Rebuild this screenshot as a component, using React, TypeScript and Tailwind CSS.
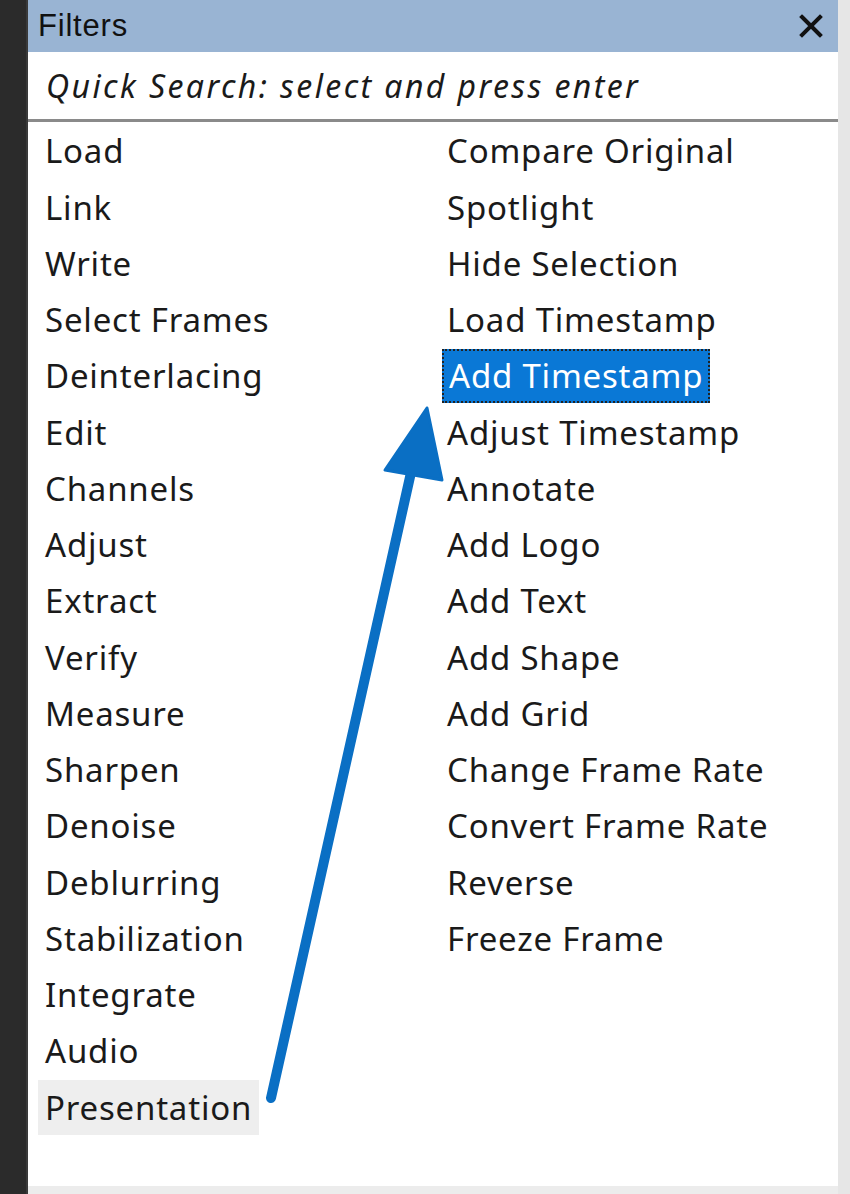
import React from "react";

const left = [
  "Load",
  "Link",
  "Write",
  "Select Frames",
  "Deinterlacing",
  "Edit",
  "Channels",
  "Adjust",
  "Extract",
  "Verify",
  "Measure",
  "Sharpen",
  "Denoise",
  "Deblurring",
  "Stabilization",
  "Integrate",
  "Audio",
  "Presentation",
];

const right = [
  "Compare Original",
  "Spotlight",
  "Hide Selection",
  "Load Timestamp",
  "Add Timestamp",
  "Adjust Timestamp",
  "Annotate",
  "Add Logo",
  "Add Text",
  "Add Shape",
  "Add Grid",
  "Change Frame Rate",
  "Convert Frame Rate",
  "Reverse",
  "Freeze Frame",
];

export default function App() {
  return (
    <div
      className="relative flex w-[850px] h-[1194px] overflow-hidden bg-white"
      style={{ fontFamily: '"Noto Sans", "Open Sans", sans-serif' }}
    >
      <div className="w-[28px] h-full bg-[#2b2b2b] border-r-2 border-[#3a3a3a]" />
      <div className="flex flex-col w-[810px] h-full">
        <div className="flex items-center justify-between h-[52px] bg-[#99b4d3] pl-[10px] pr-[14px]">
          <span
            className="text-[31px] text-[#111] tracking-[0.8px]"
            style={{ fontFamily: '"Liberation Sans", Arial, sans-serif' }}
          >
            Filters
          </span>
          <svg width="26" height="26" viewBox="0 0 26 26">
            <path d="M4 4 L22 22 M22 4 L4 22" stroke="#111" strokeWidth="4" strokeLinecap="square" />
          </svg>
        </div>
        <div className="flex items-center h-[70px] pl-[18px] border-b-[3px] border-[#8a8a8a] bg-white">
          <span className="italic text-[32px] text-[#1a1a1a] tracking-[2.4px]">
            Quick Search: select and press enter
          </span>
        </div>
        <div className="relative flex-1 flex pl-[10px] pt-[1px]">
          <div className="flex flex-col w-[404px]">
            {left.map((t) => (
              <div key={t} className="h-[56.25px] flex items-center">
                <span
                  className={
                    "px-[7px] h-[55px] flex items-center text-[33px] tracking-[0.8px] text-[#1a1a1a] " +
                    (t === "Presentation" ? "bg-[#eeeeee]" : "")
                  }
                >
                  {t}
                </span>
              </div>
            ))}
          </div>
          <div className="flex flex-col">
            {right.map((t) => (
              <div key={t} className="h-[56.25px] flex items-center">
                <span
                  className={
                    "px-[5px] h-[54px] flex items-center text-[33px] tracking-[0.8px] " +
                    (t === "Add Timestamp"
                      ? "bg-[#0a78d6] text-white border-2 border-dotted border-[#222]"
                      : "text-[#1a1a1a]")
                  }
                >
                  {t}
                </span>
              </div>
            ))}
          </div>
        </div>
        <div className="h-[8px] bg-[#ececec]" />
      </div>
      <div className="w-[12px] h-full bg-[#e6e6e6]" />
      <svg
        className="absolute left-0 top-0 pointer-events-none"
        width="850"
        height="1194"
        viewBox="0 0 850 1194"
      >
        <line x1="271" y1="1098" x2="412" y2="468" stroke="#0a6fc4" strokeWidth="10" strokeLinecap="round" />
        <polygon points="427,408 385,470 442,480" fill="#0a6fc4" stroke="#0a6fc4" strokeWidth="3" strokeLinejoin="round" />
      </svg>
    </div>
  );
}
